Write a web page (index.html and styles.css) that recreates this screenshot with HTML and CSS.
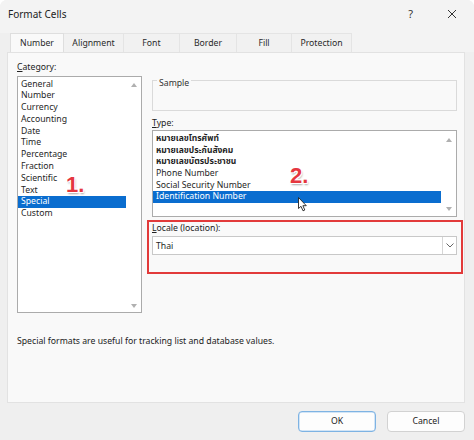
FILE: index.html
```html
<!DOCTYPE html>
<html lang="en">
<head>
<meta charset="utf-8">
<title>Format Cells</title>
<link rel="stylesheet" href="styles.css">
</head>
<body>
<div class="window">
  <div class="titlebar">
    <span class="title">Format Cells</span>
    <span class="help">?</span>
    <span class="close">
      <svg width="10" height="10" viewBox="0 0 10 10"><path d="M1 1 L9 9 M9 1 L1 9" stroke="#333" stroke-width="1" fill="none"/></svg>
    </span>
  </div>
  <div class="tabs">
    <div class="tab active w54">Number</div>
    <div class="tab w60">Alignment</div>
    <div class="tab w56">Font</div>
    <div class="tab w57">Border</div>
    <div class="tab w55">Fill</div>
    <div class="tab w60">Protection</div>
  </div>
  <div class="panel">
    <div class="grid">
      <div class="col-left">
        <div class="label"><u>C</u>ategory:</div>
        <div class="listbox cat">
          <div class="items">
            <div class="item">General</div>
            <div class="item">Number</div>
            <div class="item">Currency</div>
            <div class="item">Accounting</div>
            <div class="item">Date</div>
            <div class="item">Time</div>
            <div class="item">Percentage</div>
            <div class="item">Fraction</div>
            <div class="item">Scientific</div>
            <div class="item">Text</div>
            <div class="item sel">Special</div>
            <div class="item">Custom</div>
          </div>
          <div class="scroll">
            <span class="arrow up"></span>
            <span class="arrow down"></span>
          </div>
        </div>
      </div>
      <div class="col-right">
        <div class="sample"><span class="sample-label">Sample</span></div>
        <div class="label type-label"><u>T</u>ype:</div>
        <div class="listbox type">
          <div class="items">
            <div class="item thai"><span>หมายเลขโทรศัพท์</span></div>
            <div class="item thai"><span>หมายเลขประกันสังคม</span></div>
            <div class="item thai"><span>หมายเลขบัตรประชาชน</span></div>
            <div class="item">Phone Number</div>
            <div class="item">Social Security Number</div>
            <div class="item sel">Identification Number</div>
          </div>
          <div class="scroll">
            <span class="arrow up"></span>
            <span class="arrow down"></span>
          </div>
        </div>
        <div class="redbox">
          <div class="label"><u>L</u>ocale (location):</div>
          <div class="combo">
            <span class="combo-value">Thai</span>
            <span class="combo-btn">
              <svg width="8" height="5" viewBox="0 0 8 5"><path d="M0.5 0.5 L4 4 L7.5 0.5" stroke="#555" stroke-width="0.9" fill="none"/></svg>
            </span>
          </div>
        </div>
      </div>
    </div>
    <div class="desc">Special formats are useful for tracking list and database values.</div>
    <div class="note n1">1.</div>
    <div class="note n2">2.</div>
    <svg class="cursor" width="10" height="15" viewBox="0 0 10 15"><path d="M0.5 0.5 L0.5 11.5 L3 9.3 L5 13.8 L6.8 13 L4.9 8.7 L8.3 8.7 Z" fill="#fff" stroke="#222" stroke-width="0.9" stroke-linejoin="round"/></svg>
  </div>
  <div class="buttons">
    <div class="btn ok">OK</div>
    <div class="btn">Cancel</div>
  </div>
</div>
</body>
</html>
```
FILE: styles.css
```css
* { box-sizing: border-box; }
html, body { margin: 0; padding: 0; background: #ffffff; }
body { font-family: "Noto Sans", "Open Sans", sans-serif; font-size: 8.7px; color: #1f1f1f; }

.window {
  width: 474px; height: 440px;
  background: #efefef;
  border-radius: 7px 7px 0 0;
  overflow: hidden;
  position: relative;
}
.titlebar {
  height: 33px;
  display: flex;
  align-items: flex-start;
  background: #f3f3f3;
  padding-top: 7px;
}
.title { font-size: 10px; line-height: 14px; margin-left: 8px; flex: 1; color: #222; }
.help { font-size: 11px; line-height: 14px; margin-right: 34px; color: #333; }
.close { width: 10px; height: 14px; display: flex; align-items: center; margin-right: 17px; }

.tabs { display: flex; margin-left: 10px; height: 19px; background: #f3f3f3; }
.tab {
  height: 19px; line-height: 19px; text-align: center;
  border: 1px solid #e4e4e4; border-bottom: none; border-left: none;
  color: #2a2a2a; background: #f1f1f1;
}
.tab.active { background: #f9f9f9; border-left: 1px solid #e4e4e4; border-color: #dedede; }
.w54 { width: 54px; } .w60 { width: 60px; } .w56 { width: 56px; } .w57 { width: 57px; } .w55 { width: 55px; }

.panel {
  position: relative;
  margin-left: 7px;
  width: 458px; height: 351px;
  background: #f9f9f9;
  border: 1px solid #e2e2e2;
  padding: 8px 7px 0 9px;
}
.grid { display: grid; grid-template-columns: 125px 305px; column-gap: 10px; }
.label { line-height: 12px; height: 12px; color: #222; }
.label u { text-decoration-thickness: 0.5px; text-underline-offset: 1px; }

.listbox { background: #fff; border: 1px solid #ababab; display: flex; }
.listbox .items { flex: 1; padding-top: 1.5px; }
.item { line-height: 11.8px; height: 11.8px; padding-left: 3px; white-space: nowrap; color: #1f1f1f; }
.item.sel { background: #0a6dcf; color: #fff; }
.item.thai { font-family: "Noto Sans Thai", "Noto Sans Thai Looped", "Tlwg Typo", "Loma", "Garuda", "DejaVu Sans", sans-serif; font-weight: bold; font-size: 8.5px; display: flex; align-items: center; overflow: hidden; }
.item.thai span { display: block; line-height: 9px; }
.scroll { width: 15px; display: flex; flex-direction: column; justify-content: space-between; align-items: center; padding: 6px 0 4px; }
.arrow { width: 0; height: 0; border-left: 3.5px solid transparent; border-right: 3.5px solid transparent; }
.arrow.up { border-bottom: 4px solid #b0b0b0; }
.arrow.down { border-top: 4px solid #b0b0b0; }

.cat { margin-top: 3px; height: 237px; }

.sample { margin-top: 19px; height: 31px; border: 1px solid #dadada; position: relative; }
.sample-label { position: absolute; top: -4px; left: 4px; line-height: 12px; padding: 0 2px; background: #f9f9f9; color: #333; }
.type-label { margin-top: 6px; }
.type { margin-top: 1px; height: 87px; }
.type .scroll { padding: 7px 0 5px; }

.redbox {
  margin: 3px -6px 0 -5px;
  border: 2px solid #e23a3a;
  padding: 0 4px 15px 3px;
  height: 54px;
}
.combo {
  margin-top: 2px; height: 19px;
  background: #fff; border: 1px solid #c8c8c8;
  display: flex; align-items: center;
}
.combo-value { flex: 1; padding-left: 3px; }
.combo-btn { width: 14px; height: 17px; border-left: 1px solid #d6d6d6; display: flex; align-items: center; justify-content: center; }

.desc { margin-top: 22px; line-height: 12px; color: #222; }

.note {
  position: absolute;
  font-family: "Liberation Sans", sans-serif; font-weight: bold;
  font-size: 22px; line-height: 22px;
  color: #e5373f;
  text-shadow: 0 0 1px #fff, 1px 1px 0 #fff, -1px -1px 0 #fff, 1px -1px 0 #fff, -1px 1px 0 #fff, 1px 2px 2px rgba(0,0,0,0.35);
}
.n1 { left: 58px; top: 121px; }
.n2 { left: 282px; top: 112px; }
.cursor { position: absolute; left: 290px; top: 144px; }

.buttons { display: flex; justify-content: flex-end; gap: 11px; padding: 8px 9px 0 0; }
.btn {
  width: 78px; height: 21px; line-height: 19px; text-align: center;
  background: #fdfdfd; border: 1px solid #d2d2d2; border-radius: 4px; color: #222;
}
.btn.ok { border-color: #7eb3e3; box-shadow: inset 0 0 0 0.5px #a9cdef; }
```
